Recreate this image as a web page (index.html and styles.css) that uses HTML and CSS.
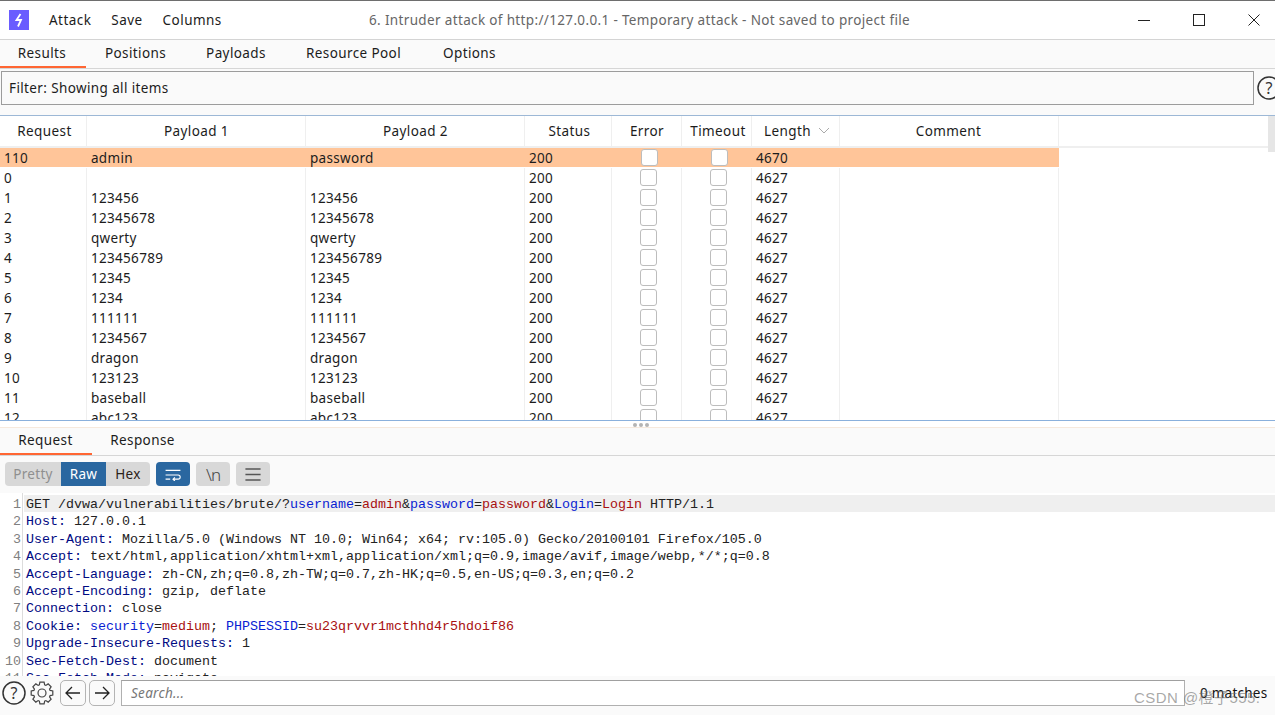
FILE: index.html
```html
<!DOCTYPE html>
<html lang="en">
<head>
<meta charset="utf-8">
<title>Intruder attack</title>
<link rel="stylesheet" href="styles.css">
</head>
<body>
<div class="app">
  <header class="titlebar">
    <svg class="logo" viewBox="0 0 20 20"><rect width="20" height="20" fill="#6a5cff"/><path d="M11.5 4 L7.5 10 H12 L9 16.5" fill="none" stroke="#fff" stroke-width="1.8"/></svg>
    <nav class="menu"><span>Attack</span><span>Save</span><span>Columns</span></nav>
    <div class="wintitle">6. Intruder attack of http://127.0.0.1 - Temporary attack - Not saved to project file</div>
    <div class="winbtns">
      <svg viewBox="0 0 12 12"><path d="M0 6.5H12" stroke="#222" fill="none"/></svg>
      <svg viewBox="0 0 12 12"><rect x=".5" y=".5" width="11" height="11" stroke="#222" fill="none"/></svg>
      <svg viewBox="0 0 12 12"><path d="M.5 .5L11.5 11.5M11.5 .5L.5 11.5" stroke="#222" fill="none"/></svg>
    </div>
  </header>
  <div class="tabs main-tabs">
    <span class="tab active t-results">Results</span><span class="tab t-pos">Positions</span><span class="tab t-pay">Payloads</span><span class="tab t-res">Resource Pool</span><span class="tab t-opt">Options</span>
  </div>
  <div class="filterrow">
    <div class="filter">Filter: Showing all items</div>
    <svg class="helpcut" viewBox="0 0 24 24"><circle cx="12" cy="12" r="11" fill="none" stroke="#333" stroke-width="1.5"/><text x="12" y="17.5" text-anchor="middle" class="qmark">?</text></svg>
  </div>
  <section class="results">
    <div class="row head">
      <span>Request</span><span>Payload 1</span><span>Payload 2</span><span>Status</span><span>Error</span><span>Timeout</span>
      <span class="sorted">Length <svg viewBox="0 0 12 7"><path d="M1 1L6 6L11 1" fill="none" stroke="#aaa"/></svg></span><span>Comment</span>
    </div>
    <div class="row hit"><span>110</span><span>admin</span><span>password</span><span>200</span><span class="chk"><i></i></span><span class="chk"><i></i></span><span>4670</span><span></span></div>
    <div class="row"><span>0</span><span></span><span></span><span>200</span><span class="chk"><i></i></span><span class="chk"><i></i></span><span>4627</span><span></span></div>
    <div class="row"><span>1</span><span>123456</span><span>123456</span><span>200</span><span class="chk"><i></i></span><span class="chk"><i></i></span><span>4627</span><span></span></div>
    <div class="row"><span>2</span><span>12345678</span><span>12345678</span><span>200</span><span class="chk"><i></i></span><span class="chk"><i></i></span><span>4627</span><span></span></div>
    <div class="row"><span>3</span><span>qwerty</span><span>qwerty</span><span>200</span><span class="chk"><i></i></span><span class="chk"><i></i></span><span>4627</span><span></span></div>
    <div class="row"><span>4</span><span>123456789</span><span>123456789</span><span>200</span><span class="chk"><i></i></span><span class="chk"><i></i></span><span>4627</span><span></span></div>
    <div class="row"><span>5</span><span>12345</span><span>12345</span><span>200</span><span class="chk"><i></i></span><span class="chk"><i></i></span><span>4627</span><span></span></div>
    <div class="row"><span>6</span><span>1234</span><span>1234</span><span>200</span><span class="chk"><i></i></span><span class="chk"><i></i></span><span>4627</span><span></span></div>
    <div class="row"><span>7</span><span>111111</span><span>111111</span><span>200</span><span class="chk"><i></i></span><span class="chk"><i></i></span><span>4627</span><span></span></div>
    <div class="row"><span>8</span><span>1234567</span><span>1234567</span><span>200</span><span class="chk"><i></i></span><span class="chk"><i></i></span><span>4627</span><span></span></div>
    <div class="row"><span>9</span><span>dragon</span><span>dragon</span><span>200</span><span class="chk"><i></i></span><span class="chk"><i></i></span><span>4627</span><span></span></div>
    <div class="row"><span>10</span><span>123123</span><span>123123</span><span>200</span><span class="chk"><i></i></span><span class="chk"><i></i></span><span>4627</span><span></span></div>
    <div class="row"><span>11</span><span>baseball</span><span>baseball</span><span>200</span><span class="chk"><i></i></span><span class="chk"><i></i></span><span>4627</span><span></span></div>
    <div class="row"><span>12</span><span>abc123</span><span>abc123</span><span>200</span><span class="chk"><i></i></span><span class="chk"><i></i></span><span>4627</span><span></span></div>
    <div class="thumb"></div>
  </section>
  <div class="divider"><span class="grip"><i></i><i></i><i></i></span></div>
  <div class="tabs sub-tabs">
    <span class="tab active t-req">Request</span><span class="tab t-resp">Response</span>
  </div>
  <div class="toolbar">
    <div class="seg"><span class="pretty">Pretty</span><span class="raw">Raw</span><span class="hex">Hex</span></div>
    <span class="tool on"><svg viewBox="0 0 18 14"><path d="M1 2.5H17M1 7.5H14.5a2.2 2.2 0 0 1 0 4.5H9M11 10L9 12L11 14M1 12H6" fill="none" stroke="#fff" stroke-width="1.2"/></svg></span>
    <span class="tool nl">\n</span>
    <span class="tool"><svg viewBox="0 0 16 12"><path d="M1 1H15M1 6H15M1 11H15" fill="none" stroke="#555" stroke-width="1.4"/></svg></span>
  </div>
  <div class="editor">
    <ol class="code">
      <li class="cur"><span class="tx">GET /dvwa/vulnerabilities/brute/?</span><span class="k">username</span><span class="tx">=</span><span class="v">admin</span><span class="tx">&amp;</span><span class="k">password</span><span class="tx">=</span><span class="v">password</span><span class="tx">&amp;</span><span class="k">Login</span><span class="tx">=</span><span class="v">Login</span><span class="tx"> HTTP/1.1</span></li>
      <li><span class="h">Host:</span> 127.0.0.1</li>
      <li><span class="h">User-Agent:</span> Mozilla/5.0 (Windows NT 10.0; Win64; x64; rv:105.0) Gecko/20100101 Firefox/105.0</li>
      <li><span class="h">Accept:</span> text/html,application/xhtml+xml,application/xml;q=0.9,image/avif,image/webp,*/*;q=0.8</li>
      <li><span class="h">Accept-Language:</span> zh-CN,zh;q=0.8,zh-TW;q=0.7,zh-HK;q=0.5,en-US;q=0.3,en;q=0.2</li>
      <li><span class="h">Accept-Encoding:</span> gzip, deflate</li>
      <li><span class="h">Connection:</span> close</li>
      <li><span class="h">Cookie:</span> <span class="k">security</span>=<span class="v">medium</span>; <span class="k">PHPSESSID</span>=<span class="v">su23qrvvr1mcthhd4r5hdoif86</span></li>
      <li><span class="h">Upgrade-Insecure-Requests:</span> 1</li>
      <li><span class="h">Sec-Fetch-Dest:</span> document</li>
      <li><span class="h">Sec-Fetch-Mode:</span> navigate</li>
    </ol>
  </div>
  <footer class="searchbar">
    <svg class="ic ic-help" viewBox="0 0 24 24"><circle cx="12" cy="12" r="11" fill="none" stroke="#333" stroke-width="1.5"/><text x="12" y="17.5" text-anchor="middle" class="qmark">?</text></svg>
    <svg class="ic ic-gear" viewBox="0 0 24 24"><path d="M20.08 9.37L22.8 9.9V14.1L20.08 14.63L19.57 15.86L21.12 18.15L18.15 21.12L15.86 19.57L14.63 20.08L14.1 22.8H9.9L9.37 20.08L8.14 19.57L5.85 21.12L2.88 18.15L4.43 15.86L3.92 14.63L1.2 14.1V9.9L3.92 9.37L4.43 8.14L2.88 5.85L5.85 2.88L8.14 4.43L9.37 3.92L9.9 1.2H14.1L14.63 3.92L15.86 4.43L18.15 2.88L21.12 5.85L19.57 8.14Z" fill="none" stroke="#444" stroke-width="1.2"/><circle cx="12" cy="12" r="4" fill="none" stroke="#444" stroke-width="1.2"/></svg>
    <span class="nav"><svg viewBox="0 0 16 14"><path d="M15 7H1M7 1L1 7L7 13" fill="none" stroke="#222" stroke-width="1.3"/></svg></span>
    <span class="nav"><svg viewBox="0 0 16 14"><path d="M1 7H15M9 1L15 7L9 13" fill="none" stroke="#222" stroke-width="1.3"/></svg></span>
    <div class="search">Search...</div>
    <span class="matches">0 matches</span>
  </footer>
  <div class="watermark">CSDN @橙子555.</div>
</div>
</body>
</html>
```
FILE: styles.css
```css
* { box-sizing: border-box; }
html, body { margin: 0; height: 100%; overflow: hidden; }
body { font-family: "Noto Sans", "Open Sans", sans-serif; font-size: 13.5px; color: #1c1c1c; background: #fff; }
.app { position: relative; width: 1275px; height: 715px; display: flex; flex-direction: column; overflow: hidden; }

.titlebar { height: 40px; flex: none; display: flex; align-items: center; border-top: 1px solid #6e6e6e; border-bottom: 1px solid #d4d4d4; background: #fff; padding-left: 9px; }
.logo { width: 20px; height: 20px; flex: none; }
.menu { display: flex; gap: 20px; margin-left: 20px; letter-spacing: .45px; }
.wintitle { position: absolute; left: 369px; top: 11px; color: #666; letter-spacing: .35px; white-space: nowrap; line-height: 19px; }
.winbtns { position: absolute; right: 15px; top: 14px; display: flex; gap: 43px; }
.winbtns svg { width: 12px; height: 12px; display: block; }

.tabs { display: flex; background: #fafafa; flex: none; border-bottom: 1px solid #d6d6d6; letter-spacing: .4px; }
.tab { display: flex; align-items: center; justify-content: center; height: 100%; padding-bottom: 2px; }
.tab.active { border-bottom: 2px solid #ff6633; padding-bottom: 0; }
.main-tabs { height: 29px; }
.t-results { width: 86px; padding-right: 2px; }
.t-pos { width: 100px; padding-right: 1px; }
.t-pay { width: 101px; padding-right: 1px; }
.t-res { width: 135px; padding-right: 2px; }
.t-opt { width: 94px; padding-left: 1px; }

.filterrow { height: 47px; flex: none; display: flex; align-items: flex-start; background: #fafafa; padding: 2px 0 0 1px; border-bottom: 1px solid #9db8d6; position: relative; overflow: hidden; }
.filter { width: 1253px; height: 34px; flex: none; border: 1px solid #9c9c9c; background: #fafafa; padding-left: 7px; line-height: 32px; letter-spacing: .38px; }
.helpcut { width: 24px; height: 24px; flex: none; margin: 5px 0 0 2.5px; }
.qmark { font-family: "Noto Sans", sans-serif; font-size: 16px; fill: #333; }

.results { height: 304px; flex: none; position: relative; overflow: hidden; background: #fff; }
.row { display: grid; grid-template-columns: 87px 219px 219px 87px 70px 70px 88px 219px; width: 1059px; height: 20px; line-height: 20px; letter-spacing: .3px; }
.row > span { padding-left: 4px; border-right: 1px solid #efefef; white-space: nowrap; overflow: hidden; }
.row.head { height: 32px; line-height: 30px; border-bottom: 2px solid #efefef; width: 1275px; letter-spacing: .4px; }
.row.head > span { text-align: center; padding: 0 0 0 1px; }
.row.head > span:nth-child(1), .row.head > span:nth-child(4), .row.head > span:nth-child(6), .row.head > span:nth-child(7) { padding-left: 3px; }
.row.head > span:nth-child(8) { padding-left: 0; padding-right: 1px; }
.row.head .sorted svg { width: 12px; height: 7px; margin-left: 3px; vertical-align: 2px; }
.row.hit { background: #ffc599; border-bottom: 1px solid #fff; }
.row.hit > span { border-right: none; }
.row > .chk { display: flex; justify-content: center; align-items: center; padding: 0 0 1px 4px; overflow: visible; }
.row.hit > .chk { padding-bottom: 0; }
.chk i { display: block; flex: none; width: 17px; height: 17px; background: #fff; border: 1.5px solid #bdbdbd; border-radius: 3px; }
.thumb { position: absolute; right: 0; top: 0; width: 7px; height: 36px; background: #e6e6e6; }

.divider { height: 8px; flex: none; border-top: 1px solid #8ab0dc; background: #fff; display: flex; justify-content: center; position: relative; border-bottom: 1px solid #f6e9dd; }
.grip { display: flex; gap: 2px; margin-top: 2px; margin-left: 6px; }
.grip i { width: 4px; height: 4px; border-radius: 50%; background: #b4b4b4; }

.sub-tabs { height: 28px; }
.sub-tabs .tab { padding-bottom: 3px; }
.sub-tabs .tab.active { padding-bottom: 1px; }
.t-req { width: 92px; padding-right: 1px; }
.t-resp { width: 100px; padding-left: 1px; }

.toolbar { height: 37px; flex: none; display: flex; align-items: center; background: #fafafa; padding: 0 0 1px 5px; gap: 6px; }
.seg { display: flex; height: 24px; border-radius: 4px; overflow: hidden; background: #d8d8d8; letter-spacing: .3px; }
.seg span { display: flex; align-items: center; justify-content: center; }
.pretty { width: 56px; color: #8f8f8f; }
.raw { width: 45px; background: #2a67a0; color: #fff; }
.hex { width: 44px; color: #2b2118; }
.tool { width: 34px; height: 24px; border-radius: 4px; background: #d8d8d8; display: flex; align-items: center; justify-content: center; color: #444; }
.tool svg { width: 18px; height: 13px; }
.tool.on { background: #2a67a0; }
.tool.nl { letter-spacing: -1px; font-size: 17px; font-weight: 300; }

.editor { flex: 1; min-height: 0; overflow: hidden; padding-top: 2px; background: #fff; }
.code { margin: 0; padding: 0 0 0 24px; list-style: none; counter-reset: line; font-family: "Liberation Mono", monospace; font-size: 13.33px; line-height: 17.4px; color: #222; position: relative; }
.code::before { content: ""; position: absolute; left: 22px; top: -3px; bottom: 0; border-left: 1px solid #dcdcdc; }
.code li { counter-increment: line; padding: 1px 0 0 2px; white-space: pre; height: 17.4px; }
.code li::before { content: counter(line); float: left; width: 21px; margin-left: -26px; text-align: right; color: #808080; }
.code li.cur { background: #efefef; }
.h { color: #000a82; }
.k { color: #0a1ed2; }
.v { color: #a81010; }
.tx { color: #222; }

.searchbar { height: 39px; flex: none; display: flex; align-items: center; background: #fafafa; padding: 0 0 5px 2px; }
.ic { width: 24px; height: 24px; flex: none; }
.ic-gear { margin-left: 4px; }
.nav { width: 26px; height: 26px; flex: none; border: 1px solid #b4b4b4; border-radius: 5px; background: #fafafa; display: flex; align-items: center; justify-content: center; }
.nav svg { width: 16px; height: 14px; }
.ic-gear + .nav { margin-left: 6px; }
.nav + .nav { margin-left: 3px; }
.search { width: 1064px; height: 26px; margin-left: 6px; border: 1px solid #b0b0b0; border-top-color: #a0a0a0; background: #fff; color: #777; font-style: italic; padding-left: 9px; line-height: 24px; letter-spacing: .3px; }
.matches { margin-left: 15px; white-space: nowrap; letter-spacing: .25px; color: #111; }
.watermark { position: absolute; left: 1134px; top: 686px; font-family: "Liberation Sans", "Noto Sans CJK SC", sans-serif; font-size: 15px; color: rgba(110,110,110,.6); white-space: nowrap; letter-spacing: .45px; }
```
